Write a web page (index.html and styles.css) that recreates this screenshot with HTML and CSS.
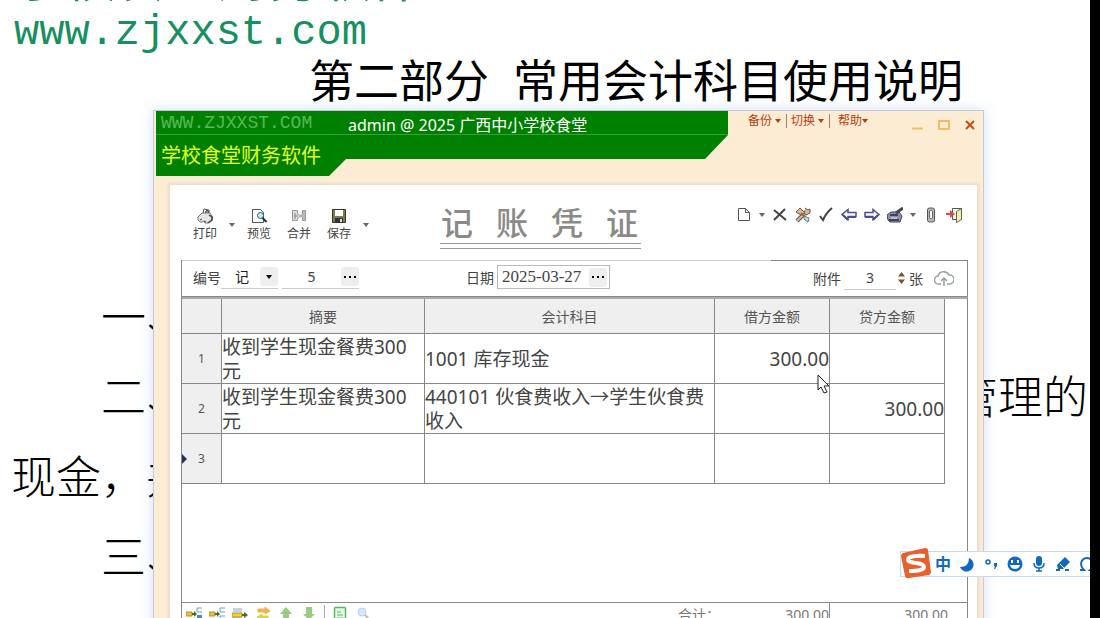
FILE: index.html
```
<!DOCTYPE html>
<html lang="zh-CN">
<head>
  <meta charset="UTF-8">
  <meta name="viewport" content="width=device-width, initial-scale=1.0">
  <title>记账凭证</title>
  <link rel="stylesheet" href="styles.css">
</head>
<body>
  <div class="desktop">
    <div class="document">
      <div class="brand">学校食堂财务软件</div>
      <div class="site">www.zjxxst.com</div>
      <h1 class="doc-title"><span>第二部分</span><span>常用会计科目使用说明</span></h1>
      <p class="line indent"><span>一、</span></p>
      <p class="line indent"><span>二、</span><span>管理的</span></p>
      <p class="line"><span>现金，并</span></p>
      <p class="line indent"><span>三、</span></p>
    </div>

    <div class="window">
      <div class="titlebar">
        <div class="banner">
          <div class="banner-top">
            <span class="banner-site">WWW.ZJXXST.COM</span>
            <span class="banner-user">admin @ 2025 广西中小学校食堂</span>
          </div>
          <div class="banner-name">学校食堂财务软件</div>
        </div>
        <div class="menus">
          <button class="menu">备份<i class="caret"></i></button>
          <button class="menu">切换<i class="caret"></i></button>
          <button class="menu">帮助<i class="caret"></i></button>
        </div>
        <div class="win-btns">
          <button aria-label="最小化"><svg width="12" height="12"><path d="M0 9.5h11" stroke="#f0c060" stroke-width="2"/></svg></button>
          <button aria-label="最大化"><svg width="12" height="12"><path d="M1 2h10v8H1z" fill="none" stroke="#f0c060" stroke-width="2"/></svg></button>
          <button aria-label="关闭"><svg width="12" height="12"><path d="M2 2l8 8M10 2l-8 8" stroke="#c85018" stroke-width="2"/></svg></button>
        </div>
      </div>

      <div class="panel">
        <div class="toolbar">
          <div class="tools">
            <button class="tool">
              <svg width="16" height="16" viewBox="0 0 16 16"><path d="M6 5l1-4 5 1v4" fill="#fff" stroke="#555"/><circle cx="10" cy="4" r="1.500" fill="#aaa" stroke="#444"/><path d="M1 9l4-4h8l2 3v4l-4 3H8l-1-2-2 1H3l-2-2z" fill="#e4e4e4" stroke="#777"/><path d="M12 7l3 2v3l-4 3" fill="none" stroke="#444" stroke-width="1.500"/><path d="M3 12l2-1M7 13l2 1" stroke="#444"/></svg>
              打印
            </button>
            <i class="caret"></i>
            <div class="tool-group">
              <button class="tool">
                <svg width="16" height="16" viewBox="0 0 16 16"><path d="M1.500 1.500h8l3 3v10h-11z" fill="#fff" stroke="#555"/><circle cx="9.500" cy="7.500" r="3" fill="#c4eef2" stroke="#356"/><path d="M11.500 10l4 4" stroke="#234" stroke-width="2"/></svg>
                预览
              </button>
              <button class="tool">
                <svg width="16" height="16" viewBox="0 0 16 16"><path d="M1.500 2.500h5v3l3 2.500-3 2.500v2h-5z" fill="#ddd" stroke="#999"/><path d="M3 8h4M4 5v6" stroke="#888"/><path d="M11.500 2.500h3v10h-3v-3L9.500 8l2-2z" fill="#bbb" stroke="#999"/></svg>
                合并
              </button>
              <button class="tool">
                <svg width="16" height="16" viewBox="0 0 16 16"><path d="M1.500 1.500h13v13h-13z" fill="#807a4a" stroke="#333"/><path d="M4 2h8v6H4z" fill="#fff"/><path d="M4 10h8v4H4z" fill="#333"/><path d="M9 11h2v3H9z" fill="#ddd"/></svg>
                保存
              </button>
            </div>
            <i class="caret"></i>
          </div>

          <h2 class="voucher-title"><span>记</span><span>账</span><span>凭</span><span>证</span></h2>

          <div class="actions">
            <button aria-label="新建"><svg width="16" height="16" viewBox="0 0 16 16"><path d="M2.500 1.500h7l4 4v8h-11zM9.500 1.500v4h4" fill="#fff" stroke="#555"/></svg></button>
            <i class="caret"></i>
            <button aria-label="删除"><svg width="16" height="16" viewBox="0 0 16 16"><path d="M2 3l12 10M13 2L2 13" stroke="#444" stroke-width="2"/></svg></button>
            <button aria-label="设置"><svg width="16" height="16" viewBox="0 0 16 16"><path d="M2 14L12 4" stroke="#555" stroke-width="4"/><path d="M2 14L12 4" stroke="#d4bda0" stroke-width="2"/><path d="M1 5l4-4 5 5-4 2zM10 1l3 2 2-1v4l-4 2" fill="#d4bda0" stroke="#7a5038"/><path d="M6 6l4 4" stroke="#a06848" stroke-width="2"/><path d="M9 9l5 2-1 4-4-3z" fill="#b4e0f0" stroke="#607888"/></svg></button>
            <button aria-label="审核"><svg width="16" height="16" viewBox="0 0 16 16"><path d="M2 9l3 4q3-7 9-12" fill="none" stroke="#444" stroke-width="2"/></svg></button>
            <button aria-label="上一张"><svg width="16" height="16" viewBox="0 0 16 16"><path d="M1 7.500l6-5v3h8v4H7v3z" fill="#fff" stroke="#4a4c94" stroke-width="1.500"/><path d="M2 8l5 5M7 10h8" stroke="#4a4c94" stroke-width="2"/></svg></button>
            <button aria-label="下一张"><svg width="16" height="16" viewBox="0 0 16 16"><path d="M15 7.500l-6-5v3H1v4h8v3z" fill="#fff" stroke="#4a4c94" stroke-width="1.500"/><path d="M14 8l-5 5M1 10h8" stroke="#4a4c94" stroke-width="2"/></svg></button>
            <button aria-label="记账"><svg width="16" height="16" viewBox="0 0 16 16"><path d="M0 8l4-3h8l3 4-2 6H3l-2-2z" fill="#8c8fbe" stroke="#444"/><path d="M9 6l7-5" stroke="#444" stroke-width="3"/><path d="M3 8h8M2 13h10" stroke="#444" stroke-width="2"/><path d="M4 11h6" stroke="#b8b8e8" stroke-width="2"/></svg></button>
            <i class="caret"></i>
            <button aria-label="附件"><svg width="16" height="16" viewBox="0 0 16 16"><rect x="4.500" y="1" width="7" height="14" rx="2" fill="#bbb" stroke="#555"/><path d="M6.500 11V4q1.500-2 3 0v7q-1.500 2-3 0" fill="#fff" stroke="#666"/></svg></button>
            <button aria-label="退出"><svg width="16" height="16" viewBox="0 0 16 16"><path d="M6.500 1.500h9v11h-9z" fill="#fff" stroke="#555"/><path d="M10.500 4.500l5-3v11l-5 3z" fill="#f4f0a8" stroke="#665"/><path d="M0 7h5" stroke="#d05040" stroke-width="2"/><path d="M4 3l5 4-5 4z" fill="#d05040"/></svg></button>
          </div>
        </div>

        <div class="form-row">
          <div class="field">
            <label for="kind">编号</label>
            <div class="underlined kind">
              <select id="kind"><option>记</option></select>
              <span class="small-btn"><i class="caret dark"></i></span>
            </div>
            <div class="underlined number">
              <input type="text" id="number" value="5" aria-label="凭证号">
              <button class="small-btn" aria-label="选择凭证号"><span class="dots"></span></button>
            </div>
          </div>
          <div class="field date-field">
            <label for="date">日期</label>
            <div class="date-box">
              <input type="text" id="date" value="2025-03-27">
              <button class="small-btn" aria-label="选择日期"><span class="dots"></span></button>
            </div>
          </div>
          <div class="field attach">
            <label for="attach">附件</label>
            <div class="underlined sheets"><input type="text" id="attach" value="3"></div>
            <svg width="9" height="14"><path d="M4.500 1L8 5.500H1zM4.500 13L8 8.500H1z" fill="#7a5428"/></svg>
            <span class="unit">张</span>
            <button class="cloud" aria-label="上传"><svg width="20" height="18" viewBox="0 0 20 18"><path d="M7 15H5a4 4 0 0 1-1-8 6 6 0 0 1 11-1 4.500 4.500 0 0 1 1 9h-3M10 17V9M7 12l3-3 3 3" fill="none" stroke="#98a09c" stroke-width="1.500"/></svg></button>
          </div>
        </div>

        <div class="sheet">
          <table class="entries">
            <colgroup><col class="c-no"><col class="c-memo"><col><col class="c-money"><col class="c-money"></colgroup>
            <thead>
              <tr><th></th><th>摘要</th><th>会计科目</th><th>借方金额</th><th>贷方金额</th></tr>
            </thead>
            <tbody>
              <tr><th>1</th><td>收到学生现金餐费300元</td><td>1001 库存现金</td><td class="money">300.00</td><td class="money"></td></tr>
              <tr><th>2</th><td>收到学生现金餐费300元</td><td>440101 伙食费收入→学生伙食费收入</td><td class="money"></td><td class="money">300.00</td></tr>
              <tr><th class="current">3</th><td></td><td></td><td class="money"></td><td class="money"></td></tr>
            </tbody>
          </table>
        </div>

        <div class="summary">
          <div class="row-tools">
            <button aria-label="插入行"><svg width="16" height="16" viewBox="0 0 16 16"><path d="M0 6h6v4H0z" fill="#e8c040" stroke="#b89020"/><path d="M6 8h4" stroke="#467028" stroke-width="2"/><path d="M8 5l3 3-3 3z" fill="#467028"/><path d="M11 2h5M11 6h5M11 2v4" fill="none" stroke="#68a0d0"/><path d="M11 9h5v5h-5z" fill="#4888c8"/></svg></button>
            <button aria-label="追加行"><svg width="16" height="16" viewBox="0 0 16 16"><path d="M0 6h6v4H0z" fill="#e8c040" stroke="#b89020"/><path d="M6 8h4" stroke="#467028" stroke-width="2"/><path d="M8 5l3 3-3 3z" fill="#467028"/><path d="M11 2h5M11 6h5M11 10h5M11 13h5M11 2v4M11 10v3" fill="none" stroke="#68a0d0"/></svg></button>
            <button aria-label="移出行"><svg width="16" height="16" viewBox="0 0 16 16"><path d="M1 3h9M1 5h9M1 12h9M1 14h9" stroke="#78a8d0"/><path d="M0 7h10v4H0z" fill="#f0d040" stroke="#b89020"/><path d="M10 9h3" stroke="#467028" stroke-width="2"/><path d="M12 6l4 3-4 3z" fill="#467028"/></svg></button>
            <button aria-label="交换"><svg width="16" height="16" viewBox="0 0 16 16"><path d="M3 3h7V1l5 4-5 3V6H3z" fill="#f4b050" stroke="#f4b050"/><path d="M13 10H7V8l-5 3 5 4v-2h6z" fill="#d4d840" stroke="#d4d840"/></svg></button>
            <button aria-label="上移"><svg width="16" height="16" viewBox="0 0 16 16"><path d="M8 1l6 7h-3v6H5V8H2z" fill="#98cc80"/></svg></button>
            <button aria-label="下移"><svg width="16" height="16" viewBox="0 0 16 16"><path d="M5 1h6v7h3l-6 6-6-6h3z" fill="#98cc80"/></svg></button>
            <span class="divider"></span>
            <button aria-label="摘要库"><svg width="16" height="16" viewBox="0 0 16 16"><rect x="2.500" y="1.500" width="11" height="13" rx="1" fill="#e8f8e8" stroke="#58b868" stroke-width="1.500"/><path d="M5 6h4M5 9h6M5 12h6" stroke="#58b868"/></svg></button>
            <button aria-label="查找"><svg width="16" height="16" viewBox="0 0 16 16"><circle cx="7" cy="6" r="4" fill="#d8e8fc" stroke="#b8d0f0"/><path d="M10 9l4 4" stroke="#c8b8b0" stroke-width="2"/></svg></button>
          </div>
          <span class="total-label">合计：</span>
          <span class="total debit">300.00</span>
          <span class="total">300.00</span>
        </div>
      </div>
    </div>

    <div class="ime">
      <svg class="ime-logo" width="34" height="34" viewBox="0 0 34 34"><path d="M4 6L26 1q3 0 3 2l3 22q0 2-2 3L10 31q-3 1-4-2L2 9q0-2 2-3z" fill="#e8602c"/><path d="M26 9Q9 8 9 13q0 2 8 3 8 1 8 4 0 4-15 4" fill="none" stroke="#fff" stroke-width="4"/></svg>
      <button class="ime-lang">中</button>
      <button aria-label="半角"><svg width="16" height="16" viewBox="0 0 16 16"><path d="M10 2a7 7 0 1 1-9 9q9 0 9-9z" fill="#1068c0"/></svg></button>
      <button aria-label="标点"><svg width="16" height="16" viewBox="0 0 16 16"><circle cx="5" cy="6" r="2" fill="none" stroke="#1068c0" stroke-width="1.500"/><path d="M11 7h3v3l-2 3h-1l1-3h-1z" fill="#1068c0"/></svg></button>
      <button aria-label="表情"><svg width="16" height="16" viewBox="0 0 16 16"><circle cx="8" cy="8" r="7.500" fill="#1068c0"/><path d="M5 4v3M11 4v3" stroke="#fff" stroke-width="2"/><path d="M3 9h10q-1 4-5 4t-5-4z" fill="#fff"/></svg></button>
      <button aria-label="语音"><svg width="16" height="16" viewBox="0 0 16 16"><rect x="5" y="0" width="6" height="10" rx="3" fill="#1068c0"/><path d="M3 7q0 5 5 5t5-5M8 12v3M5 15h6" fill="none" stroke="#1068c0" stroke-width="1.500"/></svg></button>
      <button aria-label="手写"><svg width="16" height="16" viewBox="0 0 16 16"><path d="M10 1l5 5-7 7H3l-1-4z" fill="#1068c0"/><path d="M5 8l4 4" stroke="#fff"/><path d="M1 14h4M10 14h4" stroke="#1068c0" stroke-width="2"/></svg></button>
      <button aria-label="符号"><svg width="16" height="16" viewBox="0 0 16 16"><path d="M1 14h4q-3-3-3-6a6 6 0 0 1 12 0q0 3-3 6h4" fill="none" stroke="#1068c0" stroke-width="2"/></svg></button>
    </div>

    <svg class="cursor" width="14" height="20" viewBox="0 0 14 20"><path d="M1 1v15l3-3 3 6 3-1-3-6h5z" fill="#fff" stroke="#222"/></svg>
  </div>
</body>
</html>
```
FILE: styles.css
```
* {
  box-sizing: border-box;
}

body {
  margin: 0;
  height: 100vh;
  overflow: hidden;
  background-color: black;
  font-family: "Noto Sans", "Noto Sans CJK SC", sans-serif;
  color: #444;
}

button, input, select {
  font-family: inherit;
  color: inherit;
  border: none;
  background: none;
  padding: 0;
  margin: 0;
  outline: none;
}

svg {
  display: block;
}

.desktop {
  position: relative;
  height: 100vh;
  margin-right: 10px;
  overflow: hidden;
  background-color: white;
}

/* document behind the window */
.document {
  color: black;
  font-size: 45px;
  font-family: "Noto Sans CJK SC", sans-serif;
}

.brand {
  height: 2px;
  padding-left: 14px;
  display: flex;
  align-items: flex-end;
  overflow: hidden;
  font-size: 51px;
  line-height: 54px;
  color: #159060;
}

.site {
  padding-left: 14px;
  font-family: "Liberation Mono", monospace;
  font-size: 42px;
  line-height: 62px;
  color: #159060;
}

.doc-title {
  display: flex;
  gap: 24px;
  margin: 0;
  padding-left: 309px;
  font-size: 45px;
  font-weight: 400;
  line-height: 30px;
}

.line {
  display: flex;
  justify-content: space-between;
  margin: 0;
  padding: 0 2px 0 11px;
  font-weight: 300;
  line-height: 80px;
}

.doc-title + .line {
  margin-top: 181px;
}

.indent {
  padding-left: 101px;
}

/* main window */
.window {
  position: absolute;
  top: 110px;
  left: 153px;
  right: 106px;
  bottom: -30px;
  display: flex;
  flex-direction: column;
  border: 1px solid #c8c8dc;
  background-color: #fdecd4;
  box-shadow: 0 0 12px rgba(110, 160, 230, 0.3);
}

.titlebar {
  display: flex;
  height: 74px;
  padding-left: 2px;
}

.banner {
  width: 572px;
  height: 65px;
  color: white;
  background-color: #008000;
  clip-path: polygon(0 0, 100% 0, 100% 24px, calc(100% - 23px) 48px, 190px 48px, 173px 65px, 0 65px);
}

.banner-top {
  display: flex;
  height: 24px;
  padding-left: 5px;
  border-bottom: 1px solid #38a038;
  line-height: 24px;
}

.banner-site {
  width: 187px;
  font-family: "Liberation Mono", monospace;
  font-size: 18px;
  color: #58b858;
}

.banner-user {
  font-size: 16px;
  line-height: 28px;
}

.banner-name {
  padding-left: 5px;
  font-size: 20px;
  font-weight: 400;
  line-height: 42px;
  color: #e4ff20;
}

.menus {
  display: flex;
  height: 17px;
  margin-left: 16px;
}

.menu {
  display: flex;
  align-items: center;
  gap: 3px;
  margin-top: 3px;
  padding: 0 5px 0 4px;
  font-size: 12px;
  line-height: 14px;
  color: #b83c10;
}

.menu + .menu {
  border-left: 1px solid #a08070;
}

.menu:last-child {
  gap: 0;
  padding-left: 8px;
}

.caret {
  width: 6px;
  border: 3px solid transparent;
  border-top: 4px solid #666;
  border-bottom: 0;
}

.menu .caret {
  border-top-color: #b83c10;
}

.caret.dark {
  border-top-color: black;
}

.win-btns {
  display: flex;
  gap: 14px;
  height: 28px;
  align-items: center;
  margin-left: auto;
  padding-right: 7px;
}

.panel {
  flex: 1;
  display: flex;
  flex-direction: column;
  margin: 0 6px 6px 16px;
  padding: 0 9px 8px 11px;
  background-color: white;
  box-shadow: 0 0 3px 2px #e8dccb;
}

.toolbar {
  display: flex;
  justify-content: space-between;
  height: 75px;
}

.tools {
  display: flex;
  gap: 12px;
  padding: 23px 0 0 12px;
}

.tools > .caret {
  margin-top: 15px;
}

.tool-group {
  display: flex;
  gap: 16px;
}

.tool {
  display: flex;
  flex-direction: column;
  align-items: center;
  height: 36px;
  font-size: 12px;
  line-height: 20px;
}

.voucher-title {
  display: flex;
  align-items: flex-end;
  gap: 23px;
  width: 201px;
  height: 64px;
  margin: 0;
  padding-left: 1px;
  border-bottom: 1px solid #999;
  background: linear-gradient(#999, #999) 0 58px / 100% 1px no-repeat;
  font-size: 32px;
  font-weight: 500;
  line-height: 50px;
  color: #8a8a86;
}

.actions {
  display: flex;
  align-items: center;
  gap: 7px;
  height: 60px;
  padding: 0 6px 0 24px;
}

.form-row {
  display: flex;
  align-items: center;
  height: 37px;
  padding: 0 0 2px 11px;
  border: 1px solid #888;
  border-top: none;
  background: linear-gradient(to right, #d0d0d0 75%, #888 75%) top / 100% 1px no-repeat;
  font-size: 14px;
}

.field {
  display: flex;
  align-items: center;
}

.underlined {
  display: flex;
  align-items: center;
  height: 24px;
  border-bottom: 1px solid #ccc;
}

.underlined select, .underlined input {
  flex: 1;
  min-width: 0;
  height: 22px;
  appearance: none;
  font-size: 14px;
  text-align: center;
}

.kind {
  width: 57px;
  margin-right: 4px;
  color: #222;
}

.kind select {
  padding-left: 3px;
}

.number {
  width: 77px;
}

.small-btn {
  display: flex;
  flex: none;
  justify-content: center;
  align-items: center;
  width: 18px;
  height: 19px;
  border-radius: 3px;
  background-color: #eee;
}

.dots {
  width: 12px;
  height: 2px;
  background: repeating-linear-gradient(to right, black 0 2px, transparent 2px 5px);
}

.date-field {
  margin-left: 107px;
}

.date-box {
  display: flex;
  align-items: center;
  width: 113px;
  height: 24px;
  margin-left: 3px;
  padding: 0 2px 0 4px;
  border: 1px solid #bbb;
}

.date-box input {
  flex: 1;
  min-width: 0;
  font-family: "Liberation Serif", serif;
  font-size: 17px;
}

.attach {
  margin-left: auto;
  padding: 2px 13px 0 0;
}

.sheets {
  width: 52px;
  margin: 0 1px 0 3px;
}

.unit {
  margin: 0 11px 0 3px;
}

/* entries */
.sheet {
  flex: 1;
  border: 1px solid #888;
  border-top: 2px solid #aaa;
  padding-right: 22px;
}

.entries {
  width: 100%;
  table-layout: fixed;
  border-collapse: separate;
  border-spacing: 0;
}

.c-no {
  width: 40px;
}

.c-memo {
  width: 203px;
}

.c-money {
  width: 115px;
}

.entries th {
  height: 50px;
  padding: 0;
  border-right: 1px solid #888;
  border-bottom: 1px solid #888;
  background-color: #efefef;
  font-size: 12px;
  font-weight: 400;
  color: #555;
}

.entries thead th {
  height: 35px;
  font-size: 14px;
}

.entries td {
  padding: 0;
  border-right: 1px solid #888;
  border-bottom: 1px solid #888;
  font-size: 19px;
  line-height: 24px;
}

.entries .money {
  text-align: right;
}

.entries .current {
  position: relative;
}

.current::before {
  content: "";
  position: absolute;
  left: 0;
  top: 20px;
  border: 5px solid transparent;
  border-left-color: #283060;
}

.summary {
  display: flex;
  height: 30px;
  padding-left: 4px;
  border: 1px solid #888;
  border-top: none;
  font-size: 14px;
  line-height: 24px;
  color: #777;
}

.row-tools {
  display: flex;
  align-items: center;
  gap: 7px;
  height: 22px;
}

.divider {
  width: 1px;
  height: 18px;
  background-color: #aaa;
}

.total-label {
  margin-left: auto;
}

.total {
  width: 118px;
  margin-right: 19px;
  text-align: right;
}

.total.debit {
  width: 110px;
  margin-right: 0;
  border-right: 1px solid #888;
}

/* input method bar */
.ime {
  position: absolute;
  left: calc(100% - 190px);
  bottom: 41px;
  display: flex;
  align-items: center;
  gap: 8px;
  width: 220px;
  height: 26px;
  border: 1px solid #c4dcee;
  background-color: white;
}

.ime-logo {
  flex: none;
  margin: 0 -6px 0 -2px;
}

.ime-lang {
  font-size: 16px;
  font-weight: 700;
  line-height: 20px;
  color: #1068c0;
}

.cursor {
  position: absolute;
  left: 817px;
  top: 374px;
}
```
